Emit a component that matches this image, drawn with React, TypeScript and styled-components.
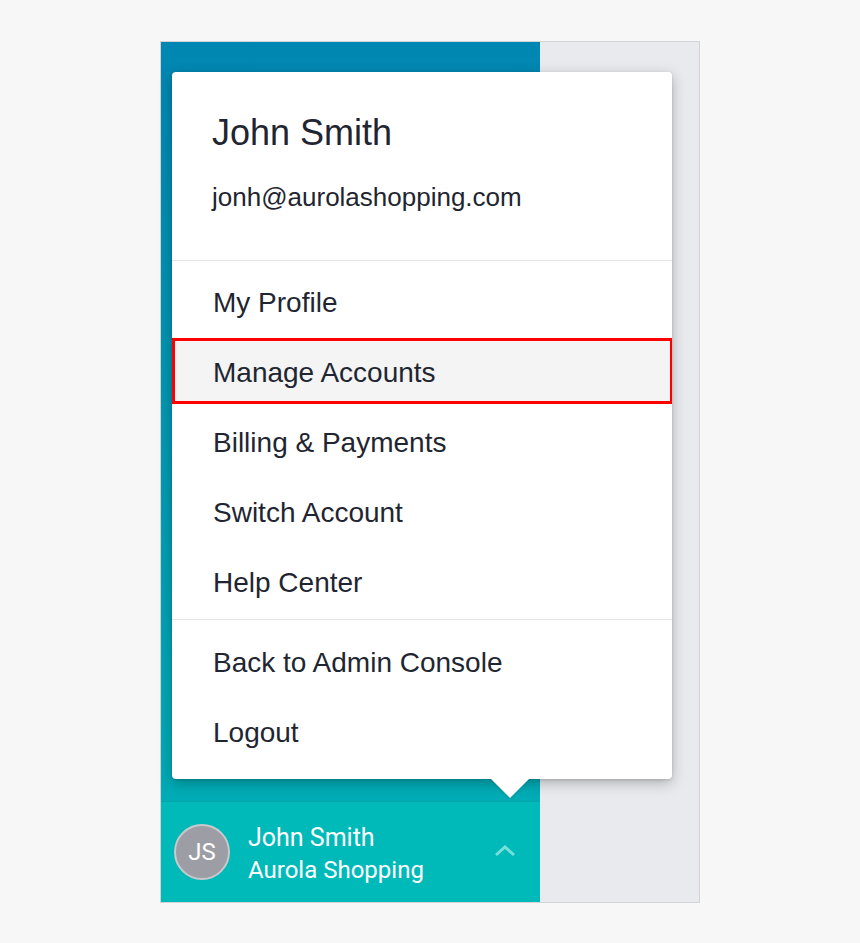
import React from 'react';
import styled, { createGlobalStyle } from 'styled-components';

const GlobalStyle = createGlobalStyle`
  html, body {
    margin: 0;
    padding: 0;
    background: #f7f7f7;
  }
  body {
    font-family: 'Liberation Sans', Arial, sans-serif;
  }
`;

const Frame = styled.div`
  position: relative;
  margin: 41px 0 0 160px;
  width: 540px;
  height: 862px;
  box-sizing: border-box;
  border: 1px solid #d2d3d7;
  display: flex;
`;

const Sidebar = styled.div`
  width: 379px;
  display: flex;
  flex-direction: column;
  background: linear-gradient(180deg, #0086b2 0%, #0098b2 45%, #00b1b6 100%);
`;

const Spacer = styled.div`
  flex: 1;
`;

const Content = styled.div`
  flex: 1;
  background: #e9eaee;
`;

const Footer = styled.div`
  height: 100px;
  border-top: 1px solid #00a6a8;
  background: #00b9b9;
  display: flex;
  align-items: center;
  padding: 0 24px 0 13px;
  gap: 18px;
`;

const Avatar = styled.div`
  width: 56px;
  height: 56px;
  box-sizing: border-box;
  border-radius: 50%;
  background: #9d9da5;
  border: 2px solid #c9c9cc;
  color: #ffffff;
  font-family: Roboto, 'Liberation Sans', sans-serif;
  font-size: 24px;
  display: flex;
  align-items: center;
  justify-content: center;
`;

const FooterText = styled.div`
  flex: 1;
  display: flex;
  flex-direction: column;
  gap: 4px;
  padding-top: 3px;
  color: #ffffff;
  font-family: Roboto, 'Liberation Sans', sans-serif;
  font-size: 25px;
  line-height: 29px;
`;

const CompanyName = styled.span`
  font-size: 24px;
`;

const Chevron = styled.svg`
  width: 22px;
  height: 12px;
  margin-bottom: 2px;
`;

const Menu = styled.div`
  position: absolute;
  left: 11px;
  top: 30px;
  width: 500px;
  background: #ffffff;
  border-radius: 4px;
  box-shadow: 0 4px 14px rgba(0, 0, 0, 0.25), 0 1px 3px rgba(0, 0, 0, 0.12);
  color: #1f2631;
  padding-bottom: 13px;

  &::after {
    content: '';
    position: absolute;
    left: 318px;
    bottom: -19px;
    width: 0;
    height: 0;
    border-left: 20px solid transparent;
    border-right: 20px solid transparent;
    border-top: 20px solid #ffffff;
    filter: drop-shadow(0 2px 1px rgba(0, 0, 0, 0.08));
  }
`;

const Header = styled.div`
  height: 189px;
  box-sizing: border-box;
  padding: 39px 40px 0;
  border-bottom: 1px solid #e6e6e6;
`;

const Name = styled.div`
  font-size: 36px;
  line-height: 44px;
`;

const Email = styled.div`
  margin-top: 26px;
  font-size: 26px;
  line-height: 32px;
`;

const Section = styled.div<{ divided?: boolean }>`
  padding-top: ${(p) => (p.divided ? '5px' : '6px')};
  padding-bottom: ${(p) => (p.divided ? '3px' : '0')};
  border-bottom: ${(p) => (p.divided ? '1px solid #e6e6e6' : 'none')};
`;

const Item = styled.div<{ active?: boolean }>`
  height: ${(p) => (p.active ? '56px' : '66px')};
  margin: ${(p) => (p.active ? '2px 0' : '0')};
  box-sizing: content-box;
  display: flex;
  align-items: center;
  padding: 4px ${(p) => (p.active ? '38px' : '41px')} 0;
  font-size: 28px;
  background: ${(p) => (p.active ? '#f4f4f4' : 'transparent')};
  border: ${(p) => (p.active ? '3px solid #ff0000' : 'none')};
  border-right-width: ${(p) => (p.active ? '2px' : '0')};
`;

const mainItems = ['My Profile', 'Manage Accounts', 'Billing & Payments', 'Switch Account', 'Help Center'];
const otherItems = ['Back to Admin Console', 'Logout'];

const App: React.FC = () => (
  <>
    <GlobalStyle />
    <Frame>
      <Sidebar>
        <Spacer />
        <Footer>
          <Avatar>JS</Avatar>
          <FooterText>
            <span>John Smith</span>
            <CompanyName>Aurola Shopping</CompanyName>
          </FooterText>
          <Chevron viewBox="0 0 22 12">
            <polyline points="2,10 11,2 20,10" fill="none" stroke="#78dfd8" strokeWidth="3" />
          </Chevron>
        </Footer>
      </Sidebar>
      <Content />
      <Menu>
        <Header>
          <Name>John Smith</Name>
          <Email>jonh@aurolashopping.com</Email>
        </Header>
        <Section divided>
          {mainItems.map((label) => (
            <Item key={label} active={label === 'Manage Accounts'}>
              {label}
            </Item>
          ))}
        </Section>
        <Section>
          {otherItems.map((label) => (
            <Item key={label}>{label}</Item>
          ))}
        </Section>
      </Menu>
    </Frame>
  </>
);

export default App;
